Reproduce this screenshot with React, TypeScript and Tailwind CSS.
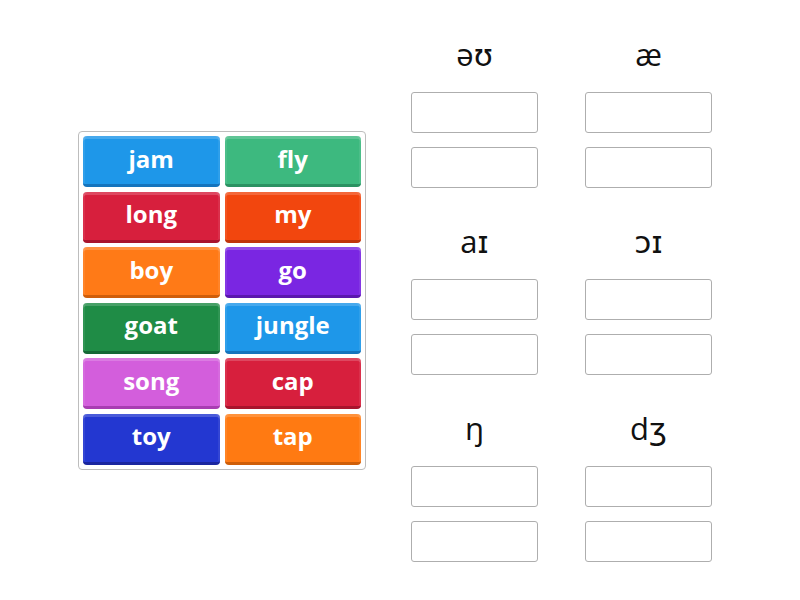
const tiles = [
  { word: 'jam', cls: 'bg-[#1e97e9] border-[#1574bd]' },
  { word: 'fly', cls: 'bg-[#3db97f] border-[#2b9262]' },
  { word: 'long', cls: 'bg-[#d71f3d] border-[#a8142d]' },
  { word: 'my', cls: 'bg-[#f2460e] border-[#c0350a]' },
  { word: 'boy', cls: 'bg-[#ff7a17] border-[#cf5e0b]' },
  { word: 'go', cls: 'bg-[#7a26e2] border-[#5a17ae]' },
  { word: 'goat', cls: 'bg-[#1f8c46] border-[#156836]' },
  { word: 'jungle', cls: 'bg-[#1e97e9] border-[#1574bd]' },
  { word: 'song', cls: 'bg-[#d35edc] border-[#a83db2]' },
  { word: 'cap', cls: 'bg-[#d71f3d] border-[#a8142d]' },
  { word: 'toy', cls: 'bg-[#2337d1] border-[#1a269f]' },
  { word: 'tap', cls: 'bg-[#ff7a12] border-[#cf5e08]' },
];

const groups = [
  ['əʊ', 'æ'],
  ['aɪ', 'ɔɪ'],
  ['ŋ', 'dʒ'],
];

function Tile({ word, cls }: { word: string; cls: string }) {
  return (
    <div
      className={`h-[51px] rounded-[4px] border-b-[3px] ${cls} flex items-center justify-center text-white font-bold text-[24px] leading-none pb-[3px] shadow-[inset_0_3px_0_rgba(255,255,255,0.18),inset_2px_0_0_rgba(255,255,255,0.08),inset_-2px_0_0_rgba(255,255,255,0.08)]`}
    >
      {word}
    </div>
  );
}

function DropBox() {
  return <div className="h-[41px] rounded-[3px] border border-[#aeaeae] bg-white" />;
}

export default function App() {
  return (
    <div
      className="w-[800px] h-[600px] bg-white flex"
      style={{ fontFamily: '"Open Sans", "DejaVu Sans", sans-serif' }}
    >
      <div className="pt-[131px] pl-[78px]">
        <div className="w-[288px] border border-[#bdbdbd] rounded-[4px] p-[4px] grid grid-cols-2 gap-x-[5px] gap-y-[4.5px]">
          {tiles.map((t) => (
            <Tile key={t.word} word={t.word} cls={t.cls} />
          ))}
        </div>
      </div>
      <div className="ml-[45px] pt-[34px] flex flex-col gap-[33px]">
        {groups.map((g, i) => (
          <div key={i} className="grid grid-cols-[127px_127px] gap-x-[47px]">
            {g.map((h) => (
              <div key={h} className="flex flex-col">
                <div className="h-[40px] leading-[40px] text-center text-[31px] text-[#111] mb-[18px]">{h}</div>
                <div className="flex flex-col gap-[14px]">
                  <DropBox />
                  <DropBox />
                </div>
              </div>
            ))}
          </div>
        ))}
      </div>
    </div>
  );
}
